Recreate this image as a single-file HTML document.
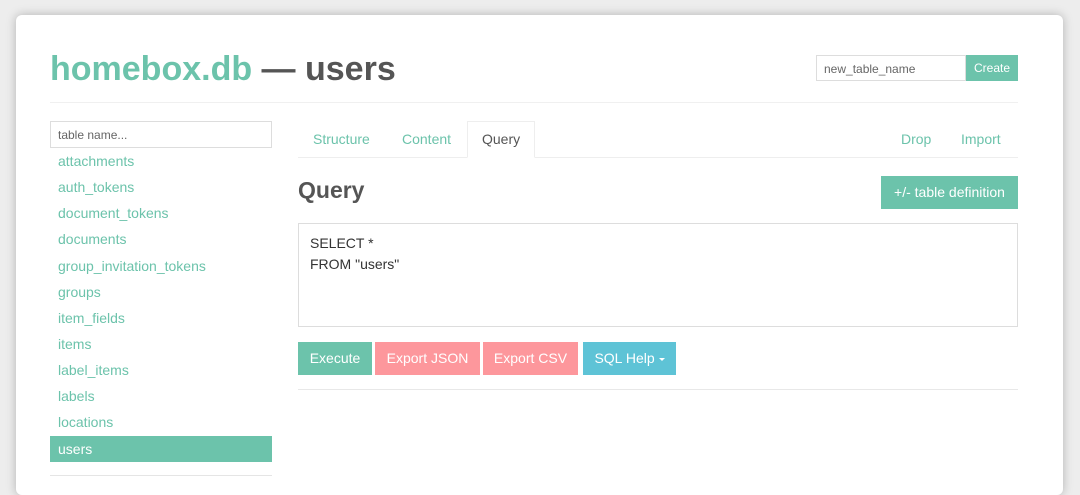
<!DOCTYPE html>
<html><head><style>
body{margin:0;width:1080px;height:477px;overflow:hidden;background:#ededed;font-family:"Liberation Sans",sans-serif;position:relative}
.card{position:absolute;left:16px;top:15px;width:1047px;height:480px;background:#fff;border-radius:6px;box-shadow:0 0 10px rgba(0,0,0,.25)}
.a{position:absolute}
.g{color:#6cc3ab}
h1{position:absolute;left:50px;top:50px;margin:0;font-size:34px;font-weight:bold;color:#555;letter-spacing:0}
.side div{position:absolute;left:58px;font-size:14px;color:#6cc3ab}
.btn{position:absolute;height:33px;line-height:33px;color:#fff;font-size:14px;text-align:center}
.tab{position:absolute;top:131px;font-size:14px;color:#6cc3ab}
</style></head><body>
<div class="card"></div>
<h1><span class="g">homebox.db</span> — users</h1>
<div class="a" style="left:816px;top:55px;width:150px;height:26px;border:1px solid #ddd;box-sizing:border-box;font-size:12px;color:#666;line-height:26px;padding-left:7px">new_table_name</div>
<div class="btn" style="left:966px;top:55px;width:52px;height:26px;line-height:26px;background:#6cc3ab;font-size:12px">Create</div>
<div class="a" style="left:50px;top:102px;width:968px;border-top:1px solid #f0f0f0"></div>
<div class="a" style="left:50px;top:121px;width:222px;height:27px;border:1px solid #ddd;box-sizing:border-box;font-size:12px;color:#666;line-height:26px;padding-left:7px">table name...</div>
<div class="side">
<div style="top:153px">attachments</div>
<div style="top:179px">auth_tokens</div>
<div style="top:205px">document_tokens</div>
<div style="top:231px">documents</div>
<div style="top:258px">group_invitation_tokens</div>
<div style="top:284px">groups</div>
<div style="top:310px">item_fields</div>
<div style="top:336px">items</div>
<div style="top:362px">label_items</div>
<div style="top:388px">labels</div>
<div style="top:414px">locations</div>
</div>
<div class="a" style="left:50px;top:436px;width:222px;height:26px;background:#6cc3ab;color:#fff;font-size:14px;line-height:26px;padding-left:8px;box-sizing:border-box">users</div>
<div class="a" style="left:50px;top:475px;width:222px;border-top:1px solid #e5e5e5"></div>
<div class="a" style="left:298px;top:157px;width:720px;border-top:1px solid #eee"></div>
<div class="a" style="left:467px;top:121px;width:68px;height:37px;border:1px solid #eee;border-bottom:1px solid #fff;box-sizing:border-box;background:#fff"></div>
<div class="tab" style="left:313px">Structure</div>
<div class="tab" style="left:402px">Content</div>
<div class="tab" style="left:482px;color:#555">Query</div>
<div class="tab" style="left:901px">Drop</div>
<div class="tab" style="left:961px">Import</div>
<div class="a" style="left:298px;top:177px;font-size:23px;font-weight:bold;color:#555">Query</div>
<div class="btn" style="left:881px;top:176px;width:137px;background:#6cc3ab">+/- table definition</div>
<div class="a" style="left:298px;top:223px;width:720px;height:104px;border:1px solid #ddd;box-sizing:border-box;padding:9px 11px;font-size:14px;line-height:21px;color:#333">SELECT *<br>FROM "users"</div>
<div class="btn" style="left:298px;top:342px;width:74px;background:#6cc3ab">Execute</div>
<div class="btn" style="left:375px;top:342px;width:105px;background:#fd979c">Export JSON</div>
<div class="btn" style="left:483px;top:342px;width:95px;background:#fd979c">Export CSV</div>
<div class="btn" style="left:583px;top:342px;width:93px;background:#5ec3d6">SQL Help <span style="display:inline-block;vertical-align:middle;border-left:3px solid transparent;border-right:3px solid transparent;border-top:3px solid #fff"></span></div>
<div class="a" style="left:298px;top:389px;width:720px;border-top:1px solid #e8e8e8"></div>
</body></html>
